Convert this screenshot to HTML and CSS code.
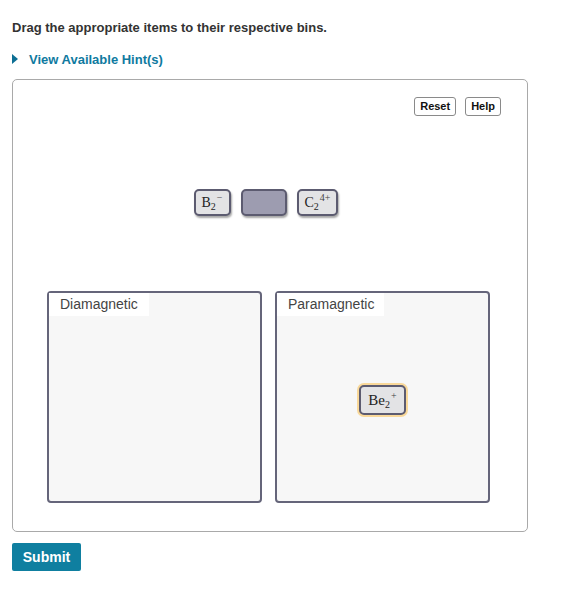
FILE: index.html
```html
<!DOCTYPE html>
<html>
<head>
<meta charset="utf-8">
<link rel="stylesheet" href="styles.css">
</head>
<body>
<div class="page">
  <p class="prompt">Drag the appropriate items to their respective bins.</p>
  <div class="hint"><span class="tri"></span><span class="hint-text">View Available Hint(s)</span></div>
  <div class="board">
    <div class="tools">
      <button class="tbtn">Reset</button>
      <button class="tbtn">Help</button>
    </div>
    <div class="tiles">
      <div class="tile"><span class="chem">B<sub>2</sub><sup>&minus;</sup></span></div>
      <div class="tile empty"></div>
      <div class="tile"><span class="chem">C<sub>2</sub><sup>4+</sup></span></div>
    </div>
    <div class="bins">
      <div class="bin">
        <div class="bin-label">Diamagnetic</div>
        <div class="bin-body"></div>
      </div>
      <div class="bin">
        <div class="bin-label">Paramagnetic</div>
        <div class="bin-body"><div class="tile placed"><span class="chem">Be<sub>2</sub><sup>+</sup></span></div></div>
      </div>
    </div>
  </div>
  <button class="submit">Submit</button>
</div>
</body>
</html>
```
FILE: styles.css
```css
* { box-sizing: border-box; }
body { margin: 0; background: #fff; font-family: "Liberation Sans", Arial, sans-serif; }
.page { padding: 20px 12px 0 12px; width: 540px; }
.prompt { margin: 0; font-size: 13px; line-height: 16px; font-weight: bold; color: #333; }
.hint { margin-top: 15px; display: flex; align-items: center; height: 16px; }
.tri { width: 0; height: 0; border-top: 5px solid transparent; border-bottom: 5px solid transparent; border-left: 6px solid #0d6f94; margin-right: 11px; }
.hint-text { font-size: 13px; font-weight: bold; color: #0f7aa0; }
.board { margin-top: 12px; width: 516px; height: 453px; border: 1px solid #a9a9a9; border-radius: 5px; display: flex; flex-direction: column; padding: 17px 0 0 0; }
.tools { display: flex; justify-content: flex-end; gap: 9px; padding-right: 26px; }
.tbtn { font-family: "Liberation Sans", Arial, sans-serif; font-size: 11px; font-weight: bold; color: #111; background: #fff; border: 1px solid #8a8a8a; border-radius: 3px; height: 19px; padding: 0 5px; line-height: 17px; }
.tiles { display: flex; justify-content: center; gap: 10px; margin-top: 73px; padding-right: 8px; }
.tile { font-family: "Liberation Serif", "Times New Roman", serif; font-size: 14px; color: #222; background: #e3e3e5; border: 2px solid #5c5b70; border-radius: 5px; height: 27px; padding: 0 6px; display: flex; align-items: center; box-shadow: 1px 2px 2px rgba(0,0,0,0.35); }
.chem { display: inline-block; line-height: 14px; white-space: nowrap; }
.chem sub { font-size: 10px; vertical-align: -3px; line-height: 0; }
.chem sup { font-size: 10px; vertical-align: 6px; line-height: 0; margin-left: 1px; color: #444; }
.tile.empty { width: 46px; background: #9d9cb0; }
.bins { display: flex; justify-content: center; gap: 13px; margin-top: 75px; padding-right: 3px; }
.bin { width: 215px; height: 212px; border: 2px solid #65657a; border-radius: 4px; background: #f7f7f7; display: flex; flex-direction: column; }
.bin-label { align-self: flex-start; background: #fff; color: #444; font-size: 14px; padding: 4px 10px 4px 11px; min-width: 100px; line-height: 15px; }
.bin-body { flex: 1; display: flex; align-items: center; justify-content: center; padding-bottom: 18px; }
.tile.placed { height: 30px; padding: 0 7px; font-size: 15px; box-shadow: 0 0 0 2px #f9d899; }
.submit { margin-top: 11px; font-family: "Liberation Sans", Arial, sans-serif; font-size: 14px; font-weight: bold; color: #fff; background: #0f7fa0; border: none; border-radius: 2px; width: 69px; height: 28px; }
```
